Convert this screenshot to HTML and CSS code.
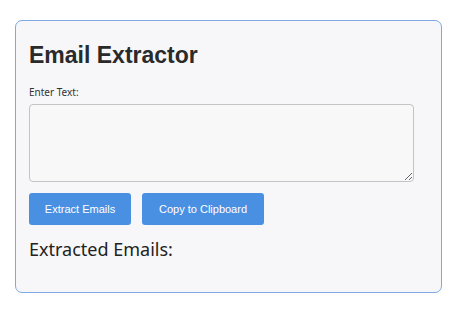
FILE: index.html
```html
<!DOCTYPE html>
<html lang="en">
<head>
<meta charset="utf-8">
<title>Email Extractor</title>
<link rel="stylesheet" href="styles.css">
</head>
<body>
<div class="card">
  <h1 class="title">Email Extractor</h1>
  <label class="label" for="input">Enter Text:</label>
  <textarea id="input" class="input"></textarea>
  <div class="actions">
    <button class="btn btn-extract">Extract Emails</button>
    <button class="btn btn-copy">Copy to Clipboard</button>
  </div>
  <h3 class="results-title">Extracted Emails:</h3>
</div>
</body>
</html>
```
FILE: styles.css
```css
html, body {
  margin: 0;
  padding: 0;
  background: #ffffff;
}

.card {
  box-sizing: border-box;
  margin: 20px 0 0 15px;
  width: 427px;
  height: 273px;
  padding: 20px 13px 0 13px;
  background: #f7f7f9;
  border: 1px solid #7ea9e1;
  border-radius: 7px;
}

.title {
  margin: 0;
  font-family: "Liberation Sans", Arial, sans-serif;
  font-size: 23px;
  line-height: 28px;
  font-weight: bold;
  color: #2a2a2a;
}

.label {
  display: block;
  margin-top: 16px;
  font-family: "Noto Sans", "Open Sans", sans-serif;
  font-size: 10px;
  line-height: 14px;
  color: #333333;
}

.input {
  display: block;
  box-sizing: border-box;
  margin: 5px 0 0 0;
  width: 385px;
  height: 78px;
  padding: 6px;
  background: #f9f8f9;
  border: 1px solid #c4c4c4;
  border-radius: 4px;
  resize: both;
  font-family: "Noto Sans", sans-serif;
  font-size: 11px;
}

.actions {
  display: flex;
  gap: 11px;
  margin-top: 11px;
}

.btn {
  box-sizing: border-box;
  height: 32px;
  padding: 0;
  border: none;
  border-radius: 3px;
  background: #4a90e2;
  color: #ffffff;
  font-family: "Liberation Sans", Arial, sans-serif;
  font-size: 11px;
}

.btn-extract {
  width: 102px;
}

.btn-copy {
  width: 122px;
}

.results-title {
  margin: 11px 0 0 0;
  font-family: "Noto Sans", "Open Sans", sans-serif;
  font-size: 18px;
  line-height: 27px;
  font-weight: normal;
  color: #222222;
}
```
